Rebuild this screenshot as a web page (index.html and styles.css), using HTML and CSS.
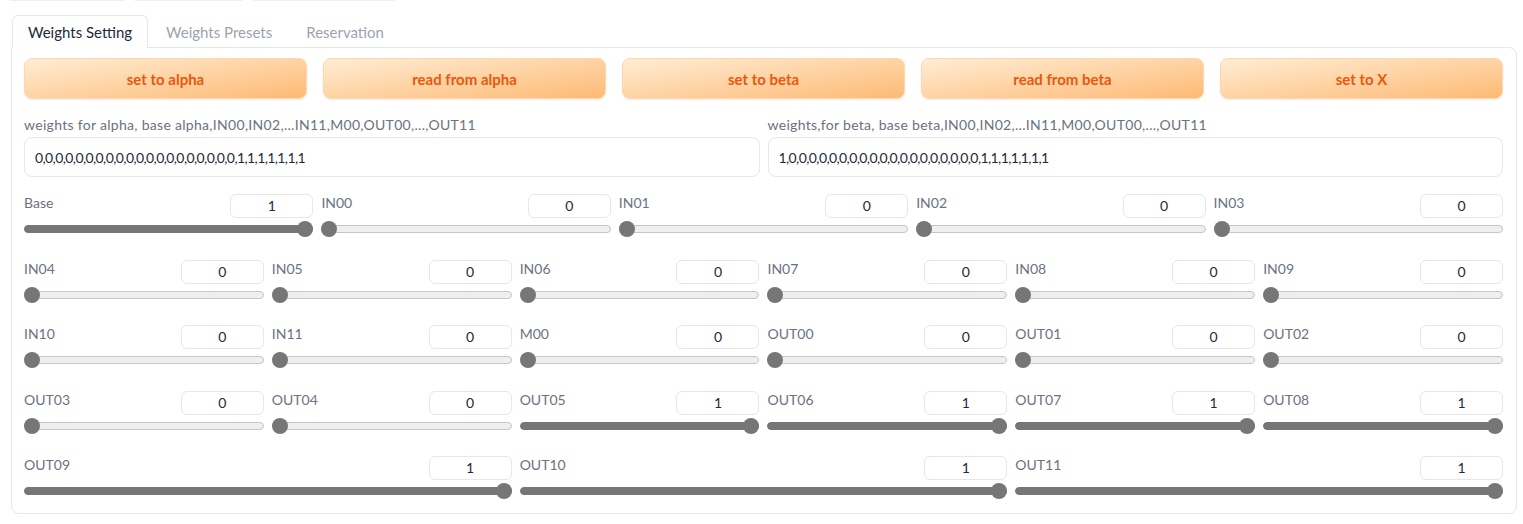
FILE: index.html
```html
<!DOCTYPE html>
<html lang="en">
<head>
    <meta charset="UTF-8">
    <meta name="viewport" content="width=device-width, initial-scale=1.0">
    <title>Weights Setting</title>
    <link rel="stylesheet" href="styles.css">
</head>
<body>
    <div class="cut-strip">
        <span class="cut a"></span><span class="cut b"></span><span class="cut c"></span>
    </div>
    <div class="page">
        <div class="tabs">
            <button class="tab selected">Weights Setting</button>
            <button class="tab">Weights Presets</button>
            <button class="tab">Reservation</button>
        </div>
        <div class="panel">
            <div class="button-row">
                <button class="orange-button">set to alpha</button>
                <button class="orange-button">read from alpha</button>
                <button class="orange-button">set to beta</button>
                <button class="orange-button">read from beta</button>
                <button class="orange-button">set to X</button>
            </div>

            <div class="text-row">
                <label class="text-block">
                    <span class="label">weights for alpha, base alpha,IN00,IN02,...IN11,M00,OUT00,...,OUT11</span>
                    <input class="text-input" type="text" value="0,0,0,0,0,0,0,0,0,0,0,0,0,0,0,0,0,0,0,0,1,1,1,1,1,1,1">
                </label>
                <label class="text-block">
                    <span class="label">weights,for beta, base beta,IN00,IN02,...IN11,M00,OUT00,...,OUT11</span>
                    <input class="text-input" type="text" value="1,0,0,0,0,0,0,0,0,0,0,0,0,0,0,0,0,0,0,0,1,1,1,1,1,1,1">
                </label>
            </div>

            <div class="slider-row cols-5">
                <div class="slider-block">
                    <div class="slider-head"><span class="label">Base</span><span class="number">1</span></div>
                    <div class="slider max"></div>
                </div>
                <div class="slider-block">
                    <div class="slider-head"><span class="label">IN00</span><span class="number">0</span></div>
                    <div class="slider"></div>
                </div>
                <div class="slider-block">
                    <div class="slider-head"><span class="label">IN01</span><span class="number">0</span></div>
                    <div class="slider"></div>
                </div>
                <div class="slider-block">
                    <div class="slider-head"><span class="label">IN02</span><span class="number">0</span></div>
                    <div class="slider"></div>
                </div>
                <div class="slider-block">
                    <div class="slider-head"><span class="label">IN03</span><span class="number">0</span></div>
                    <div class="slider"></div>
                </div>
            </div>

            <div class="slider-row cols-6">
                <div class="slider-block">
                    <div class="slider-head"><span class="label">IN04</span><span class="number">0</span></div>
                    <div class="slider"></div>
                </div>
                <div class="slider-block">
                    <div class="slider-head"><span class="label">IN05</span><span class="number">0</span></div>
                    <div class="slider"></div>
                </div>
                <div class="slider-block">
                    <div class="slider-head"><span class="label">IN06</span><span class="number">0</span></div>
                    <div class="slider"></div>
                </div>
                <div class="slider-block">
                    <div class="slider-head"><span class="label">IN07</span><span class="number">0</span></div>
                    <div class="slider"></div>
                </div>
                <div class="slider-block">
                    <div class="slider-head"><span class="label">IN08</span><span class="number">0</span></div>
                    <div class="slider"></div>
                </div>
                <div class="slider-block">
                    <div class="slider-head"><span class="label">IN09</span><span class="number">0</span></div>
                    <div class="slider"></div>
                </div>
            </div>

            <div class="slider-row cols-6">
                <div class="slider-block">
                    <div class="slider-head"><span class="label">IN10</span><span class="number">0</span></div>
                    <div class="slider"></div>
                </div>
                <div class="slider-block">
                    <div class="slider-head"><span class="label">IN11</span><span class="number">0</span></div>
                    <div class="slider"></div>
                </div>
                <div class="slider-block">
                    <div class="slider-head"><span class="label">M00</span><span class="number">0</span></div>
                    <div class="slider"></div>
                </div>
                <div class="slider-block">
                    <div class="slider-head"><span class="label">OUT00</span><span class="number">0</span></div>
                    <div class="slider"></div>
                </div>
                <div class="slider-block">
                    <div class="slider-head"><span class="label">OUT01</span><span class="number">0</span></div>
                    <div class="slider"></div>
                </div>
                <div class="slider-block">
                    <div class="slider-head"><span class="label">OUT02</span><span class="number">0</span></div>
                    <div class="slider"></div>
                </div>
            </div>

            <div class="slider-row cols-6">
                <div class="slider-block">
                    <div class="slider-head"><span class="label">OUT03</span><span class="number">0</span></div>
                    <div class="slider"></div>
                </div>
                <div class="slider-block">
                    <div class="slider-head"><span class="label">OUT04</span><span class="number">0</span></div>
                    <div class="slider"></div>
                </div>
                <div class="slider-block">
                    <div class="slider-head"><span class="label">OUT05</span><span class="number">1</span></div>
                    <div class="slider max"></div>
                </div>
                <div class="slider-block">
                    <div class="slider-head"><span class="label">OUT06</span><span class="number">1</span></div>
                    <div class="slider max"></div>
                </div>
                <div class="slider-block">
                    <div class="slider-head"><span class="label">OUT07</span><span class="number">1</span></div>
                    <div class="slider max"></div>
                </div>
                <div class="slider-block">
                    <div class="slider-head"><span class="label">OUT08</span><span class="number">1</span></div>
                    <div class="slider max"></div>
                </div>
            </div>

            <div class="slider-row cols-3">
                <div class="slider-block">
                    <div class="slider-head"><span class="label">OUT09</span><span class="number">1</span></div>
                    <div class="slider max"></div>
                </div>
                <div class="slider-block">
                    <div class="slider-head"><span class="label">OUT10</span><span class="number">1</span></div>
                    <div class="slider max"></div>
                </div>
                <div class="slider-block">
                    <div class="slider-head"><span class="label">OUT11</span><span class="number">1</span></div>
                    <div class="slider max"></div>
                </div>
            </div>
        </div>
    </div>
</body>
</html>
```

FILE: styles.css
```css
body {
    margin: 0;
    font-family: Lato, "Liberation Sans", sans-serif;
    background: #fff;
    color: #1f2937;
}
.cut-strip {
    display: flex;
    height: 1px;
    padding-left: 10px;
}
.cut {
    height: 1px;
    background: #efefef;
}
.cut.a { width: 115px; }
.cut.b { width: 107px; margin-left: 10px; }
.cut.c { width: 142px; margin-left: 11px; }
.page {
    padding: 14px 6px 0 11px;
}
.tabs {
    display: flex;
    gap: 2px;
    margin-left: 1px;
    margin-bottom: -1px;
    position: relative;
    z-index: 1;
}
.tab {
    font-family: inherit;
    font-size: 15px;
    height: 33px;
    padding: 0 15px;
    border: 1px solid transparent;
    border-bottom: none;
    border-radius: 6px 6px 0 0;
    background: transparent;
    color: #9ca3af;
    cursor: pointer;
}
.tab.selected {
    background: #fff;
    border-color: #e5e7eb;
    color: #1f2937;
}
.panel {
    border: 1px solid #e5e7eb;
    border-radius: 0 8px 8px 8px;
    padding: 10px 13px 14px 12px;
}
.button-row {
    display: grid;
    grid-template-columns: repeat(5, 1fr);
    gap: 16px;
}
.orange-button {
    height: 41px;
    font-family: inherit;
    font-size: 15px;
    font-weight: 700;
    color: #ea580c;
    background: linear-gradient(to bottom right, #ffedd5, #fdba74);
    border: 1px solid #fed7aa;
    border-radius: 8px;
    box-shadow: 0 1px 2px rgba(0, 0, 0, 0.08);
    cursor: pointer;
}
.text-row {
    display: grid;
    grid-template-columns: 1fr 1fr;
    gap: 8px;
    margin-top: 16px;
}
.text-block {
    display: flex;
    flex-direction: column;
}
.label {
    font-size: 14px;
    line-height: 20px;
    color: #6b7280;
}
.text-block .label {
    letter-spacing: 0.3px;
}
.text-input {
    margin-top: 2px;
    height: 40px;
    box-sizing: border-box;
    padding: 0 10px;
    font-family: inherit;
    font-size: 14px;
    letter-spacing: -0.6px;
    color: #1f2937;
    border: 1px solid #e5e7eb;
    border-radius: 8px;
    outline: none;
}
.slider-row {
    display: grid;
    gap: 8px;
    margin-top: 17px;
}
.slider-row + .slider-row {
    margin-top: 22.5px;
}
.cols-5 { grid-template-columns: repeat(5, 1fr); }
.cols-6 { grid-template-columns: repeat(6, 1fr); }
.cols-3 { grid-template-columns: repeat(3, 1fr); }
.slider-head {
    display: flex;
    justify-content: space-between;
    align-items: flex-start;
    height: 24px;
}
.slider-head .label {
    line-height: 18px;
}
.number {
    width: 83px;
    height: 24px;
    box-sizing: border-box;
    border: 1px solid #e5e7eb;
    border-radius: 6px;
    font-size: 14px;
    line-height: 22px;
    text-align: center;
    color: #1f2937;
}
.slider {
    position: relative;
    height: 8px;
    box-sizing: border-box;
    margin: 7px 0 4px;
    border: 1px solid #c6c6c6;
    border-radius: 4px;
    background: #efefef;
}
.slider.max {
    background: #767676;
    border-color: #767676;
}
/* knob */
.slider::after {
    content: "";
    position: absolute;
    top: 50%;
    left: -1px;
    width: 16px;
    height: 16px;
    margin-top: -8px;
    border-radius: 50%;
    background: #767676;
}
.slider.max::after {
    left: auto;
    right: -1px;
}
```
